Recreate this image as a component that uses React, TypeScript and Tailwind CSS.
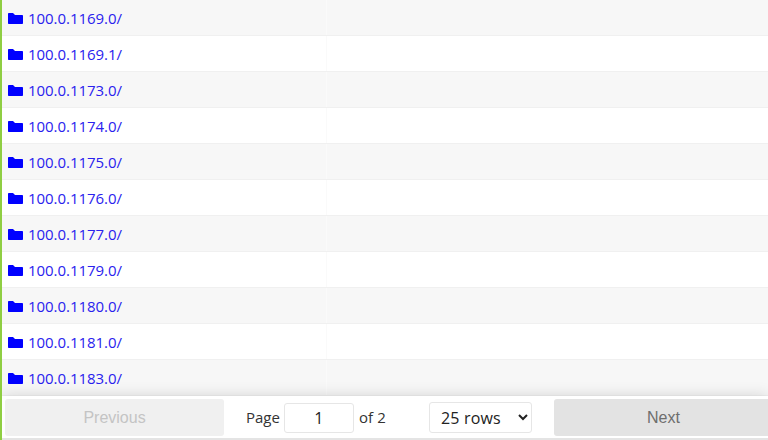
const versions = [
  '100.0.1169.0/',
  '100.0.1169.1/',
  '100.0.1173.0/',
  '100.0.1174.0/',
  '100.0.1175.0/',
  '100.0.1176.0/',
  '100.0.1177.0/',
  '100.0.1179.0/',
  '100.0.1180.0/',
  '100.0.1181.0/',
  '100.0.1183.0/',
];

function FolderIcon() {
  return (
    <svg width="15" height="11" viewBox="0 0 15 11" className="shrink-0 mt-[2px]">
      <path d="M0 1C0 .4.4 0 1 0h4l2 2h7c.6 0 1 .4 1 1v7c0 .6-.4 1-1 1H1c-.6 0-1-.4-1-1z" fill="#0000ff" />
    </svg>
  );
}

export default function App() {
  return (
    <div className="w-[768px] h-[440px] overflow-hidden bg-white border-l-2 border-[#8fce43] font-['Open_Sans','Liberation_Sans',sans-serif]">
      {/* Rows */}
      <div className="h-[396px]">
        {versions.map((v, i) => (
          <div key={v} className={`h-9 flex border-b border-[#f0f0f0] ${i % 2 === 0 ? 'bg-[#f7f7f7]' : 'bg-white'}`}>
            <div className="w-[325px] flex items-center pl-[6px] gap-[5px] border-r border-[#fafafa]">
              <FolderIcon />
              <a className="mt-[1px] text-[15px] tracking-[-0.05px] text-[#2a22ee]">{v}</a>
            </div>
            <div className="flex-1" />
          </div>
        ))}
      </div>

      {/* Pagination */}
      <div className="relative h-[44px] flex items-start pt-[3px] pl-[3px] gap-[22px] shadow-[0_0_15px_0_rgba(0,0,0,0.15)] border-b-2 border-[#e4e4e4] bg-white font-['Liberation_Sans',sans-serif]">
        <button className="w-[219px] h-[37px] shrink-0 rounded-[3px] bg-[#f0f0f0] text-[16px] text-[#c4c4c4]">Previous</button>
        <div className="w-[286px] shrink-0 flex items-center h-[37px] whitespace-nowrap text-[15px] text-[#333] font-['Open_Sans',sans-serif]">
          <span>Page</span>
          <input
            readOnly
            value="1"
            className="ml-[4px] w-[70px] h-[30px] shrink-0 rounded-[3px] border border-[#e6e6e6] text-center text-[16px] text-[#222] outline-none"
          />
          <span className="ml-[5px] shrink-0 tracking-[0.1px]">of 2</span>
          <select className="ml-[43px] w-[103px] h-[31px] shrink-0 rounded-[3px] border border-[#e6e6e6] bg-white pl-[7px] text-[16px] tracking-[0.2px] text-[#222] outline-none">
            <option>25 rows</option>
          </select>
        </div>
        <button className="w-[219px] h-[37px] shrink-0 rounded-[3px] bg-[#e3e3e3] text-[16px] text-[#6e6e6e]">Next</button>
      </div>
    </div>
  );
}
